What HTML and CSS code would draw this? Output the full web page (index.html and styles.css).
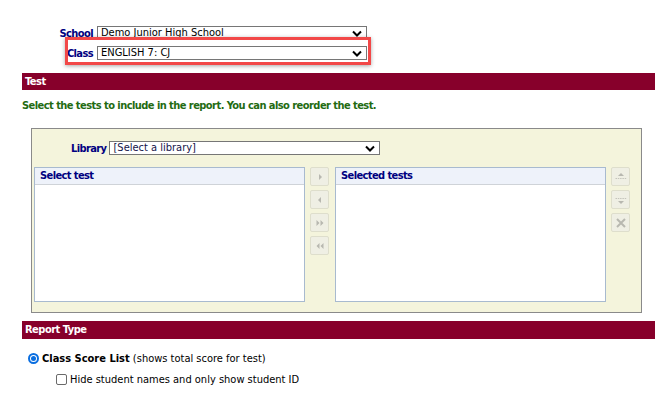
FILE: index.html
```html
<!DOCTYPE html>
<html>
<head>
<meta charset="utf-8">
<link rel="stylesheet" href="styles.css">
</head>
<body>
<div class="page">
  <div class="top">
    <div class="frow">
      <span class="flabel">School</span>
      <div class="sel sel-school"><span>Demo Junior High School</span><svg class="chev" width="10" height="7" viewBox="0 0 10 7"><path d="M1 1.5 L5 5.5 L9 1.5" fill="none" stroke="#000" stroke-width="2"/></svg></div>
    </div>
    <div class="frow">
      <span class="flabel">Class</span>
      <div class="sel sel-class"><span>ENGLISH 7: CJ</span><svg class="chev" width="10" height="7" viewBox="0 0 10 7"><path d="M1 1.5 L5 5.5 L9 1.5" fill="none" stroke="#000" stroke-width="2"/></svg></div>
    </div>
    <div class="highlight"></div>
  </div>

  <div class="bar">Test</div>
  <p class="desc">Select the tests to include in the report. You can also reorder the test.</p>

  <div class="panel">
    <div class="librow">
      <span class="flabel">Library</span>
      <div class="sel sel-lib"><span>[Select a library]</span><svg class="chev" width="10" height="7" viewBox="0 0 10 7"><path d="M1 1.5 L5 5.5 L9 1.5" fill="none" stroke="#000" stroke-width="2"/></svg></div>
    </div>
    <div class="lists">
      <div class="listbox">
        <div class="lhead">Select test</div>
      </div>
      <div class="btns">
        <div class="btn"><svg width="18" height="18" viewBox="0 0 18 18"><path d="M8 6 L11 9 L8 12 Z" fill="#b8b8b0"/></svg></div>
        <div class="btn"><svg width="18" height="18" viewBox="0 0 18 18"><path d="M10 6 L7 9 L10 12 Z" fill="#b8b8b0"/></svg></div>
        <div class="btn"><svg width="18" height="18" viewBox="0 0 18 18"><path d="M5.5 6 L8.5 9 L5.5 12 Z M9.5 6 L12.5 9 L9.5 12 Z" fill="#b8b8b0"/></svg></div>
        <div class="btn"><svg width="18" height="18" viewBox="0 0 18 18"><path d="M8.5 6 L5.5 9 L8.5 12 Z M12.5 6 L9.5 9 L12.5 12 Z" fill="#b8b8b0"/></svg></div>
      </div>
      <div class="listbox">
        <div class="lhead">Selected tests</div>
      </div>
      <div class="btns">
        <div class="btn"><svg width="18" height="18" viewBox="0 0 18 18"><path d="M6 8 L9 5 L12 8 Z" fill="#b8b8b0"/><path d="M3.5 10.5 H14.5" stroke="#c4c4bc" stroke-width="1" stroke-dasharray="1.5 0.8"/></svg></div>
        <div class="btn"><svg width="18" height="18" viewBox="0 0 18 18"><path d="M3.5 7.5 H14.5" stroke="#c4c4bc" stroke-width="1" stroke-dasharray="1.5 0.8"/><path d="M6 10 L9 13 L12 10 Z" fill="#b8b8b0"/></svg></div>
        <div class="btn"><svg width="18" height="18" viewBox="0 0 18 18"><path d="M5 5 L13 13 M13 5 L5 13" stroke="#b8b8b0" stroke-width="2"/></svg></div>
      </div>
    </div>
  </div>

  <div class="bar bar2">Report Type</div>
  <div class="opt">
    <span class="radio"><span class="dot"></span></span>
    <span class="optlabel"><b>Class Score List</b> (shows total score for test)</span>
  </div>
  <div class="opt opt2">
    <span class="check"></span>
    <span class="optlabel">Hide student names and only show student ID</span>
  </div>
</div>
</body>
</html>
```

FILE: styles.css
```css
html, body {
  margin: 0;
  padding: 0;
  background: #fff;
}
.page {
  font-family: "DejaVu Sans Condensed", "DejaVu Sans", sans-serif;
  font-stretch: condensed;
  font-size: 11px;
  color: #000;
  padding-left: 22px;
  position: relative;
}
.top {
  padding-top: 26px;
  height: 73px;
  box-sizing: border-box;
  display: flex;
  flex-direction: column;
  gap: 6px;
}
.frow {
  display: flex;
  align-items: center;
  height: 14px;
}
.flabel {
  font-weight: bold;
  color: #000080;
  letter-spacing: -0.6px;
}
.frow .flabel {
  width: 73px;
  text-align: right;
  padding-right: 2px;
  box-sizing: border-box;
}
.sel {
  box-sizing: border-box;
  height: 14px;
  border: 1px solid #767676;
  background: #fff;
  display: flex;
  align-items: center;
  justify-content: space-between;
  padding: 0 4px 0 3px;
  color: #000;
  line-height: 12px;
  letter-spacing: 0;
}
.sel-school, .sel-class { width: 270px; margin-left: 2px; }
.chev { flex: none; }
.highlight {
  position: absolute;
  left: 65px;
  top: 37px;
  width: 306px;
  height: 28px;
  box-sizing: border-box;
  border: 3px solid #f24848;
  box-shadow: 0 1px 4px rgba(0,0,0,0.35);
}
.bar {
  background: #87002b;
  color: #fff;
  font-weight: bold;
  height: 17px;
  line-height: 17px;
  padding-left: 3px;
  letter-spacing: -0.5px;
}
.desc {
  margin: 10px 0 0 0;
  color: #236b12;
  font-weight: bold;
  line-height: 12px;
  height: 12px;
  letter-spacing: -0.55px;
}
.panel {
  margin: 16px 0 0 9px;
  width: 611px;
  box-sizing: border-box;
  border: 1px solid #8a8a8a;
  background: #f4f4dc;
  padding: 12px 11px 10px 2px;
}
.librow {
  display: flex;
  align-items: center;
  padding-left: 37px;
  height: 14px;
}
.librow .flabel {
  padding-right: 3px;
}
.sel-lib {
  width: 271px;
  color: #14144a;
}
.lists {
  display: flex;
  margin-top: 12px;
  gap: 5px;
}
.lists .btns:nth-child(2) { margin-right: 1px; }
.listbox {
  width: 271px;
  height: 135px;
  box-sizing: border-box;
  border: 1px solid #a8bacf;
  background: #fff;
}
.lhead {
  height: 17px;
  box-sizing: border-box;
  background: #eef2fa;
  border-bottom: 1px solid #cfd3d8;
  color: #000080;
  font-weight: bold;
  line-height: 16px;
  padding-left: 5px;
  letter-spacing: -0.6px;
}
.btns {
  display: flex;
  flex-direction: column;
  gap: 4px;
}
.btn {
  width: 19px;
  height: 19px;
  box-sizing: border-box;
  border: 1px solid #dedecc;
  border-radius: 2px;
  background: #efefe4;
  display: flex;
  align-items: center;
  justify-content: center;
}
.btn svg { flex: none; }
.bar2 {
  margin-top: 8px;
  height: 18px;
  line-height: 18px;
}
.opt {
  display: flex;
  align-items: center;
  margin-top: 12px;
  padding-left: 6px;
  height: 14px;
}
.radio {
  width: 11px;
  height: 11px;
  box-sizing: border-box;
  border: 2px solid #0a6ee0;
  border-radius: 50%;
  display: flex;
  align-items: center;
  justify-content: center;
  margin-right: 3px;
  background: #fff;
}
.dot {
  width: 5px;
  height: 5px;
  border-radius: 50%;
  background: #0a6ee0;
}
.opt2 {
  margin-top: 7px;
  padding-left: 34px;
}
.check {
  width: 11px;
  height: 11px;
  box-sizing: border-box;
  border: 1px solid #6a6a6a;
  border-radius: 2px;
  background: #fff;
  margin-right: 3px;
}
```
